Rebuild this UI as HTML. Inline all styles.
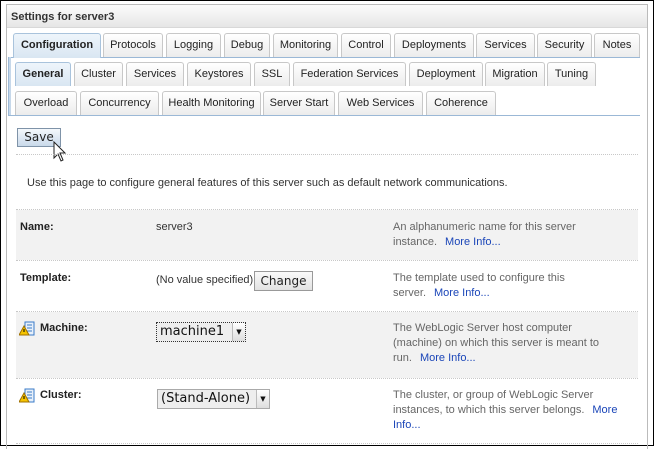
<!DOCTYPE html>
<html><head><style>
*{margin:0;padding:0;box-sizing:border-box}
body{width:654px;height:446px;background:#fff;font-family:"Liberation Sans",sans-serif;font-size:11px;color:#333;position:relative;overflow:hidden}
.frame{position:absolute;left:0;top:0;width:654px;height:446px;border:1px solid #000}
.panel{position:absolute;left:6px;top:4px;width:642px;height:445px;border:1px solid #bbb;border-bottom:none}
.hdr{position:absolute;left:7px;top:5px;width:640px;height:23px;background:linear-gradient(#fbfbfb,#e6e6e6);border-bottom:1px solid #d8d8d8;font-weight:bold;font-size:11px;padding:6px 4px;color:#333}
.t{position:absolute;height:24px;border:1px solid #c8c8c8;border-bottom:none;border-radius:3px 3px 0 0;background:linear-gradient(#fff,#ececec);text-align:center;line-height:22px;font-size:11px;color:#222;white-space:nowrap}
.a{background:linear-gradient(#eef5fb,#d9e6f2);font-weight:bold;border-color:#a9c3dc}
.ln{position:absolute;height:1px;background:#9bb8d6}
.dot{position:absolute;left:16px;width:622px;border-top:1px dotted #c8c8c8}
.row{position:absolute;left:16px;width:622px}
.g{background:#f2f2f2}
.lbl{position:absolute;left:4px;font-weight:bold;color:#222}
.val{position:absolute;left:140px;color:#333}
.desc{position:absolute;left:377px;width:214px;color:#666;line-height:15px}
a{color:#1a45b8;text-decoration:none;margin-left:8px}
.btn{position:absolute;border:1px solid #999;background:linear-gradient(#fafafa,#e2e2e2);font-size:12px;text-align:center;color:#222;font-family:"DejaVu Sans",sans-serif}
.sel{position:absolute;border:1px solid #aaa;background:#eee;font-family:"DejaVu Sans",sans-serif;font-size:13px;color:#111;height:20px;line-height:18px;padding-left:3px}
.sel .ar{position:absolute;right:0;top:0;width:13px;height:18px;background:linear-gradient(#fff,#ddd);border-left:1px solid #bbb;font-size:7px;text-align:center;line-height:18px}
.ic{position:absolute;left:3px;width:16px;height:16px}
</style></head><body>
<div class="frame"></div>
<div class="panel"></div>
<div class="hdr">Settings for server3</div>

<div class="ln" style="left:8px;top:57px;width:632px"></div>
<div class="t a" style="left:13px;top:33px;width:88px;height:25px;border-bottom:none">Configuration</div>
<div class="t" style="left:103px;top:33px;width:60px">Protocols</div>
<div class="t" style="left:166px;top:33px;width:55px">Logging</div>
<div class="t" style="left:224px;top:33px;width:46px">Debug</div>
<div class="t" style="left:273px;top:33px;width:65px">Monitoring</div>
<div class="t" style="left:341px;top:33px;width:50px">Control</div>
<div class="t" style="left:394px;top:33px;width:80px">Deployments</div>
<div class="t" style="left:476px;top:33px;width:59px">Services</div>
<div class="t" style="left:537px;top:33px;width:55px">Security</div>
<div class="t" style="left:594px;top:33px;width:46px">Notes</div>

<div style="position:absolute;left:8px;top:57px;width:3px;height:59px;background:#c6d8ea;border-left:1px solid #9bb8d6"></div>
<div class="t a" style="left:15px;top:62px;width:56px">General</div>
<div class="t" style="left:74px;top:62px;width:49px">Cluster</div>
<div class="t" style="left:126px;top:62px;width:58px">Services</div>
<div class="t" style="left:187px;top:62px;width:64px">Keystores</div>
<div class="t" style="left:254px;top:62px;width:36px">SSL</div>
<div class="t" style="left:293px;top:62px;width:113px">Federation Services</div>
<div class="t" style="left:409px;top:62px;width:74px">Deployment</div>
<div class="t" style="left:485px;top:62px;width:60px">Migration</div>
<div class="t" style="left:547px;top:62px;width:49px">Tuning</div>

<div class="t" style="left:15px;top:91px;width:62px">Overload</div>
<div class="t" style="left:80px;top:91px;width:79px">Concurrency</div>
<div class="t" style="left:162px;top:91px;width:99px">Health Monitoring</div>
<div class="t" style="left:263px;top:91px;width:72px">Server Start</div>
<div class="t" style="left:338px;top:91px;width:85px">Web Services</div>
<div class="t" style="left:426px;top:91px;width:70px">Coherence</div>
<div class="ln" style="left:8px;top:115px;width:632px"></div>

<div class="btn" style="left:17px;top:128px;width:44px;height:19px;line-height:17px;background:linear-gradient(#f4f8fc,#c9d9ea);border-color:#7f93a8">Save</div>
<svg style="position:absolute;left:53px;top:141px" width="14" height="22" viewBox="0 0 14 22"><path d="M1 1 L1 17 L5 13 L8 20 L10 19 L7 12 L12 12 Z" fill="#fff" stroke="#222" stroke-width="1"/></svg>
<div class="dot" style="top:154px"></div>
<div style="position:absolute;left:27px;top:177px;color:#333">Use this page to configure general features of this server such as default network communications.</div>

<div class="dot" style="top:209px"></div>
<div class="row g" style="top:210px;height:50px">
<div class="lbl" style="top:11px">Name:</div>
<div class="val" style="top:11px">server3</div>
<div class="desc" style="top:10px">An alphanumeric name for this server instance.<a>More Info...</a></div>
</div>
<div class="dot" style="top:260px"></div>
<div class="row" style="top:261px;height:50px">
<div class="lbl" style="top:11px">Template:</div>
<div class="val" style="top:13px">(No value specified)</div>
<div class="btn" style="left:238px;top:10px;width:59px;height:20px;line-height:18px">Change</div>
<div class="desc" style="top:10px">The template used to configure this server.<a>More Info...</a></div>
</div>
<div class="dot" style="top:311px"></div>
<div class="row g" style="top:312px;height:66px">
<svg class="ic" style="top:9px" viewBox="0 0 16 16"><rect x="6" y="1" width="9" height="13" fill="#e8f0fa" stroke="#3a7bc8"/><line x1="8" y1="4" x2="13" y2="4" stroke="#3a7bc8"/><line x1="8" y1="7" x2="13" y2="7" stroke="#3a7bc8"/><line x1="8" y1="10" x2="13" y2="10" stroke="#3a7bc8"/><path d="M5 5 L10 14 L0 14 Z" fill="#f5c400" stroke="#a07000"/><rect x="4.5" y="8" width="1" height="3" fill="#000"/></svg>
<div class="lbl" style="left:24px;top:10px">Machine:</div>
<div class="sel" style="left:140px;top:10px;width:90px;border:1px dotted #333">machine1<div class="ar">▼</div></div>
<div class="desc" style="top:9px">The WebLogic Server host computer (machine) on which this server is meant to run.<a>More Info...</a></div>
</div>
<div class="dot" style="top:378px"></div>
<div class="row" style="top:379px;height:64px">
<svg class="ic" style="top:9px" viewBox="0 0 16 16"><rect x="6" y="1" width="9" height="13" fill="#e8f0fa" stroke="#3a7bc8"/><line x1="8" y1="4" x2="13" y2="4" stroke="#3a7bc8"/><line x1="8" y1="7" x2="13" y2="7" stroke="#3a7bc8"/><line x1="8" y1="10" x2="13" y2="10" stroke="#3a7bc8"/><path d="M5 5 L10 14 L0 14 Z" fill="#f5c400" stroke="#a07000"/><rect x="4.5" y="8" width="1" height="3" fill="#000"/></svg>
<div class="lbl" style="left:24px;top:10px">Cluster:</div>
<div class="sel" style="left:141px;top:10px;width:113px">(Stand-Alone)<div class="ar">▼</div></div>
<div class="desc" style="top:9px;width:240px">The cluster, or group of WebLogic Server<br>instances, to which this server belongs.<a>More Info...</a></div>
</div>
<div class="dot" style="top:443px"></div>
</body></html>
